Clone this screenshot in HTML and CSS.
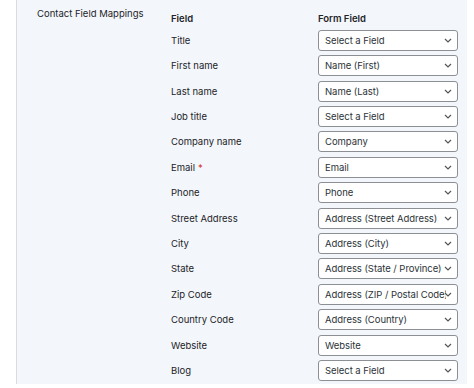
FILE: index.html
```
<!DOCTYPE html>
<html lang="en">
<head>
  <meta charset="utf-8">
  <meta name="viewport" content="width=device-width, initial-scale=1">
  <title>Contact Field Mappings</title>
<link rel="stylesheet" href="styles.css">
</head>
<body>
  <div class="panel">
    <div class="setting">
      <div class="setting-label">Contact Field Mappings</div>
      <div class="map-table">
        <div class="map-head">Field</div>
        <div class="map-head">Form Field</div>

        <label class="map-key">Title</label>
        <select class="map-value"><option>Select a Field</option></select>

        <label class="map-key">First name</label>
        <select class="map-value"><option>Name (First)</option></select>

        <label class="map-key">Last name</label>
        <select class="map-value"><option>Name (Last)</option></select>

        <label class="map-key">Job title</label>
        <select class="map-value"><option>Select a Field</option></select>

        <label class="map-key">Company name</label>
        <select class="map-value"><option>Company</option></select>

        <label class="map-key">Email <span class="required">*</span></label>
        <select class="map-value"><option>Email</option></select>

        <label class="map-key">Phone</label>
        <select class="map-value"><option>Phone</option></select>

        <label class="map-key">Street Address</label>
        <select class="map-value"><option>Address (Street Address)</option></select>

        <label class="map-key">City</label>
        <select class="map-value"><option>Address (City)</option></select>

        <label class="map-key">State</label>
        <select class="map-value"><option>Address (State / Province)</option></select>

        <label class="map-key">Zip Code</label>
        <select class="map-value"><option>Address (ZIP / Postal Code)</option></select>

        <label class="map-key">Country Code</label>
        <select class="map-value"><option>Address (Country)</option></select>

        <label class="map-key">Website</label>
        <select class="map-value"><option>Website</option></select>

        <label class="map-key">Blog</label>
        <select class="map-value"><option>Select a Field</option></select>

        <label class="map-key"></label>
        <select class="map-value"><option>Select a Field</option></select>
      </div>
    </div>
  </div>
</body>
</html>
```

FILE: styles.css
```
body {
  margin: 0;
  background: #fff;
  font-family: Inter, "Liberation Sans", sans-serif;
  font-size: 9.5px;
  color: #1d2327;
}
.panel {
  margin-left: 16px;
  width: 450px;
  height: 384px;
  background: #f3f7fc;
  border-left: 1px solid #dcdcde;
}
.setting {
  display: grid;
  grid-template-columns: 134px 1fr;
  padding-left: 20px;
}
.setting-label {
  padding-top: 8px;
  line-height: 12px;
}
.map-table {
  display: grid;
  grid-template-columns: 147px 140px;
  grid-template-rows: 15px;
  grid-auto-rows: 21px;
  row-gap: 4.4px;
  padding-top: 10.5px;
}
.map-head {
  font-weight: 600;
  line-height: 15px;
}
.map-key {
  display: flex;
  align-items: center;
}
.required {
  color: #d63638;
  margin-left: 3px;
}
.map-value {
  appearance: none;
  -webkit-appearance: none;
  height: 21px;
  box-sizing: border-box;
  margin: 0;
  padding: 0 11px 0 6px;
  border: 1px solid #8c8f94;
  border-radius: 3px;
  background: #fff url("data:image/svg+xml;utf8,<svg xmlns='http://www.w3.org/2000/svg' width='8' height='5' viewBox='0 0 8 5'><path d='M1 1l3 3 3-3' fill='none' stroke='%23555' stroke-width='1.2'/></svg>") no-repeat right 5px center;
  font-family: Inter, "Liberation Sans", sans-serif;
  font-size: 9.5px;
  letter-spacing: -0.05px;
  color: #2c3338;
  white-space: nowrap;
  overflow: hidden;
}
```
